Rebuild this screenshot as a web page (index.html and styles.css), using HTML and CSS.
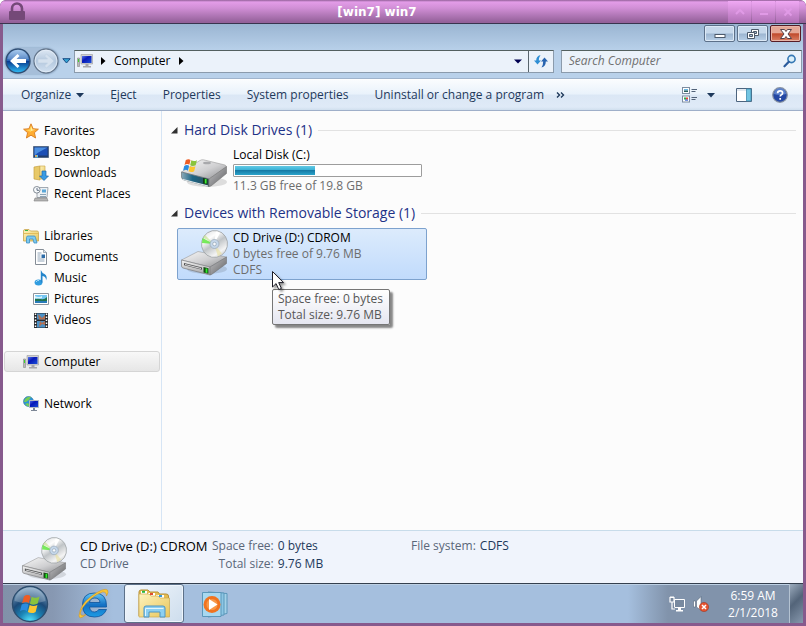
FILE: index.html
```html
<!DOCTYPE html>
<html lang="en">
<head>
<meta charset="utf-8">
<title>[win7] win7</title>
<link rel="stylesheet" href="styles.css">
</head>
<body>
<svg class="defs" aria-hidden="true">
  <defs>
    <linearGradient id="metal" x1="0" y1="0" x2="1" y2="1"><stop offset="0" stop-color="#f8f8f8"/><stop offset=".55" stop-color="#cfcfd1"/><stop offset="1" stop-color="#8c8d90"/></linearGradient>
    <linearGradient id="side" x1="0" y1="0" x2="1" y2="1"><stop offset="0" stop-color="#c4c4c6"/><stop offset="1" stop-color="#5e5f62"/></linearGradient>
    <linearGradient id="front" x1="0" y1="0" x2="0" y2="1"><stop offset="0" stop-color="#f4f4f4"/><stop offset="1" stop-color="#a2a2a4"/></linearGradient>
    <linearGradient id="teal" x1="0" y1="0" x2="1" y2="0"><stop offset="0" stop-color="#8ba9b8"/><stop offset=".4" stop-color="#1d6686"/><stop offset="1" stop-color="#2e4d5a"/></linearGradient>
    <linearGradient id="screen" x1="0" y1="0" x2="1" y2="1"><stop offset="0" stop-color="#5a78e8"/><stop offset=".4" stop-color="#0818b8"/><stop offset="1" stop-color="#1c50d8"/></linearGradient>
    <linearGradient id="disc" x1="0" y1="0" x2="1" y2="1"><stop offset="0" stop-color="#d4d6d8"/><stop offset=".3" stop-color="#fdfdfd"/><stop offset=".5" stop-color="#c0c4c7"/><stop offset=".75" stop-color="#f4f4f4"/><stop offset="1" stop-color="#b0b4b7"/></linearGradient>
    <linearGradient id="folder" x1="0" y1="0" x2="1" y2="1"><stop offset="0" stop-color="#fdf3bd"/><stop offset="1" stop-color="#e9c65c"/></linearGradient>
    <radialGradient id="orb" cx=".5" cy="1" r="1"><stop offset="0" stop-color="#58e8ff"/><stop offset=".3" stop-color="#1b86b8"/><stop offset=".6" stop-color="#1c4a78"/><stop offset="1" stop-color="#8fb0cc"/></radialGradient>
    <linearGradient id="back" x1="0" y1="0" x2="0" y2="1"><stop offset="0" stop-color="#9cc4ee"/><stop offset=".48" stop-color="#2864b4"/><stop offset=".52" stop-color="#083c90"/><stop offset="1" stop-color="#30c0f8"/></linearGradient>
    <linearGradient id="fwd" x1="0" y1="0" x2="0" y2="1"><stop offset="0" stop-color="#dfe9f4"/><stop offset=".5" stop-color="#b4c8de"/><stop offset="1" stop-color="#d3e2f2"/></linearGradient>
    <linearGradient id="ie" x1="0" y1="0" x2="0" y2="1"><stop offset="0" stop-color="#64c8f8"/><stop offset=".5" stop-color="#1470c4"/><stop offset="1" stop-color="#1c9ce4"/></linearGradient>
    <symbol id="computer" viewBox="0 0 16 16">
      <path d="M.5 5h2v8.500h-2z" fill="#b8b8b8" stroke="#888" stroke-width=".6"/><path d="M1.500 6v3" stroke="#3fd42c"/>
      <path d="M4 1.500h11.500v9.500H4z" fill="#d0d0d4" stroke="#9a9a9e" stroke-width=".6"/><path d="M5 3h9.500v7H5z" fill="url(#screen)"/>
      <path d="M8.500 11h3v2h2.500v1.500H6V13h2.500z" fill="#a6a6aa"/>
    </symbol>
    <symbol id="flag" viewBox="0 0 16 16">
      <path d="M3 2.200C5 .8 6.800 1 8 2L6.800 7.300C5.500 6.300 3.500 6.200 1.600 7.400z" fill="#ed5d24"/>
      <path d="M8.900 2.500c1.900 1 3.900 1 6-.2l-1.400 5.400c-2 1.100-4 1.100-5.900.1z" fill="#8ac43c"/>
      <path d="M1.300 8.400C3.300 7.200 5.200 7.300 6.500 8.300L5.200 13.500C3.900 12.400 2 12.300 0 13.600z" fill="#2a8ce0"/>
      <path d="M7.400 8.700c1.900 1 3.900 1 5.900 0l-1.400 5.300c-2 1.200-4 1.200-5.900.1z" fill="#fcc630"/>
    </symbol>
    <symbol id="cddrive" viewBox="0 0 48 46">
      <ellipse cx="27" cy="39" rx="20" ry="5" fill="#000" opacity=".12"/>
      <path d="M1.500 30 18 21.500 46.500 27 30 37z" fill="url(#metal)" stroke="#9a9a9a" stroke-width=".6"/>
      <path d="M1.500 30 30 37v8L3 38q-1.500-.5-1.500-2z" fill="url(#front)" stroke="#7c7c7e" stroke-width=".7"/>
      <path d="M30 37 46.500 27v6.500L31.500 44.500 30 45z" fill="url(#side)" stroke="#727274" stroke-width=".6"/>
      <path d="M4 33l18 4.500v2.300L4 35.300z" fill="#4d4e50"/><path d="M5 34.500l16 4" stroke="#fff" stroke-width=".8"/>
      <path d="M23.500 37 28.500 38.200v5.500l-5-1.200z" fill="#174d14"/><path d="M26.500 38.500v4.300" stroke="#2bf028" stroke-width="1.800"/>
      <ellipse cx="34.500" cy="14" rx="13" ry="13.500" fill="url(#disc)" stroke="#a0a5a8" stroke-width=".8" transform="rotate(12 34.500 14)"/>
      <path d="M34 14 22 13 22.500 8z" fill="#60e840" opacity=".85"/><path d="M34 14 23 7.500 25 5z" fill="#b8e070" opacity=".5"/><path d="M34 14l4 12.500 4-3z" fill="#e8e09c" opacity=".6"/><path d="M34 14 36 1.500 40 3z" fill="#fff"/>
      <circle cx="34.500" cy="14" r="4.500" fill="#c5d7ea" stroke="#98a8b8" stroke-width=".7"/><circle cx="34.500" cy="14" r="1.800" fill="#f8fafc" stroke="#93a5b5" stroke-width=".7"/>
    </symbol>
  </defs>
</svg>

<header class="host-bar">
  <svg class="lock" viewBox="0 0 16 19"><path d="M3 9V6.500a5 5 0 0 1 10 0V9" fill="none" stroke="#744978" stroke-width="2.600"/><rect y="9" width="16" height="9" rx="1" fill="#744978"/></svg>
  <h1>[win7] win7</h1>
  <div class="host-buttons">
    <button aria-label="Shade"><svg viewBox="0 0 12 12"><path d="M2 8l4-4 4 4" /></svg></button>
    <button aria-label="Minimize host"><svg viewBox="0 0 12 12"><path d="M2 8h8"/></svg></button>
    <button aria-label="Close host"><svg viewBox="0 0 12 12"><path d="M2.500 2.500l7 7m0-7-7 7"/></svg></button>
  </div>
</header>

<div class="screen">
  <div class="glass">
    <div class="caption">
      <button aria-label="Minimize"><svg viewBox="0 0 16 12"><rect x="3" y="6.500" width="10" height="3" fill="#fff" stroke="#4d5a6b"/></svg></button>
      <button aria-label="Restore"><svg viewBox="0 0 16 12"><path d="M6.500 1.500h7v6h-7z" fill="#fff" stroke="#4d5a6b"/><path d="M8.500 3.500h3v2h-3z" fill="#a3bad2" stroke="#4d5a6b"/><path d="M2.500 4.500h7v6h-7z" fill="#fff" stroke="#4d5a6b"/><path d="M4.500 6.500h3v2h-3z" fill="#a3bad2" stroke="#4d5a6b"/></svg></button>
      <button class="close" aria-label="Close"><svg viewBox="0 0 16 12"><path d="M2.500 1.500h4L8 3.500l1.500-2h4L10 6l3.500 4.500h-4L8 8.500l-1.500 2h-4L6 6z" fill="#fff" stroke="#544048"/></svg></button>
    </div>
    <div class="navrow">
      <div class="arrows">
        <button aria-label="Back"><svg viewBox="0 0 26 26"><circle cx="13" cy="13" r="12" fill="url(#back)" stroke="#304e74" stroke-width="1.400"/><path d="M2.500 11a10.600 10.600 0 0 1 21 0q-10 3-21 0z" fill="#fff" opacity=".2"/><path d="M5 13l7.500-7 2 2-3 3H21v4h-9.500l3 3-2 2z" fill="#fff"/></svg></button>
        <button aria-label="Forward"><svg viewBox="0 0 26 26"><circle cx="13" cy="13" r="12" fill="url(#fwd)" stroke="#66788e" stroke-width="1.300"/><circle cx="13" cy="13" r="10.900" fill="none" stroke="#e4eef8" stroke-width=".8"/><path d="M21 13l-7.500-7-2 2 3 3H5v4h9.500l-3 3 2 2z" fill="#d5e1ee" stroke="#bccee0" stroke-width=".6"/></svg></button>
      </div>
      <button class="recent" aria-label="Recent pages"><svg viewBox="0 0 9 6"><path d="M.8.700h7.400L4.500 5z" fill="#35a4d4" stroke="#184c84"/></svg></button>
      <div class="address">
        <svg class="icon16"><use href="#computer"/></svg>
        <button class="crumb-arrow" aria-label="Locations"><svg viewBox="0 0 5 8"><path d="M0 0l4.500 4L0 8z"/></svg></button>
        <button class="crumb">Computer</button>
        <button class="crumb-arrow" aria-label="Subfolders"><svg viewBox="0 0 5 8"><path d="M0 0l4.500 4L0 8z"/></svg></button>
        <button class="history" aria-label="Previous locations"><svg viewBox="0 0 8 5"><path d="M0 .5h8L4 4.500z" fill="#000050"/></svg></button>
        <button class="refresh" aria-label="Refresh"><svg viewBox="0 0 16 16"><path d="M1 7.500 4.500 11.500 8 7.500H5.800q0-3 1.700-5.500Q3.200 3 3.200 7.500z" fill="#2e8ed4"/><path d="M8 8.500 11.500 4.500 15 8.500h-2.200q0 5-4.300 6 1.700-2.500 1.700-6z" fill="#2864b0"/></svg></button>
      </div>
      <div class="search">
        <input type="search" placeholder="Search Computer" aria-label="Search Computer">
        <svg viewBox="0 0 14 14"><circle cx="8.500" cy="5" r="3.600" fill="#dcf0fa" stroke="#3678b4" stroke-width="1.600"/><path d="M5.800 7.800 1.500 12.300" stroke="#2c5c9c" stroke-width="2.200" stroke-linecap="round"/></svg>
      </div>
    </div>
  </div>

  <div class="toolbar">
    <button>Organize <svg class="down" viewBox="0 0 8 5"><path d="M0 0h8L4 4.500z"/></svg></button>
    <button>Eject</button>
    <button>Properties</button>
    <button>System properties</button>
    <button>Uninstall or change a program</button>
    <button aria-label="More commands"><svg class="more" viewBox="0 0 9 6"><path d="M1 .5 3.500 3 1 5.500M5 .5 7.500 3 5 5.500"/></svg></button>
    <div class="tools">
      <button aria-label="Change view"><svg class="icon16" viewBox="0 0 16 16"><rect x=".5" y=".5" width="7" height="6" fill="#fff" stroke="#7d8da0"/><path d="M2 2h4v1.500H2z" fill="#69b8e4"/><path d="M2 3.500h4V5H2z" fill="#2c5f5c"/><rect x=".5" y="9" width="7" height="6" fill="#fff" stroke="#7d8da0"/><path d="M2 10.500h2v2H2z" fill="#2cae46"/><path d="M4 10.500h2v2H4z" fill="#ee4632"/><path d="M3 12.500h3v1.200H3z" fill="#3560ce"/><path d="M9.500 2.500H15M9.500 4.500h4M9.500 10.500H15M9.500 12.500h4" stroke="#516278"/></svg></button>
      <button aria-label="View options"><svg class="down" viewBox="0 0 8 5"><path d="M0 0h8L4 4.500z"/></svg></button>
      <button class="pane" aria-label="Preview pane"><svg class="icon16" viewBox="0 0 16 16"><path d="M.5 1.500h15v13H.5z" fill="#fff" stroke="#4c647e"/><path d="M1 2h14v2H1z" fill="#e1e8f0"/><path d="M10.500 2h4.500v12h-4.500z" fill="#72c5e2" stroke="#3f8db0" stroke-width=".8"/></svg></button>
      <button aria-label="Help"><svg class="icon16" viewBox="0 0 16 16"><circle cx="8" cy="8" r="7.300" fill="#2448a4" stroke="#8993a2" stroke-width="1.200"/><path d="M2 7a6 6 0 0 1 12 0q-6 2-12 0z" fill="#7b9fdf" opacity=".65"/><path d="M5.600 6.200q0-2.400 2.500-2.400t2.500 2.100q0 1.200-1.500 2-.8.500-.8 1.600M8.200 11v1.700" fill="none" stroke="#fff" stroke-width="1.700"/></svg></button>
    </div>
  </div>

  <main class="content">
    <nav class="sidebar" aria-label="Folders">
      <ul>
        <li><a href="#"><svg class="icon16" viewBox="0 0 16 16"><path d="M8 .8l2.100 4.900 5.300.5-4 3.500 1.200 5.300L8 12.200 3.400 15l1.200-5.300-4-3.500 5.300-.5z" fill="#ffad32" stroke="#d87d20" stroke-width=".9"/><path d="M8 2.800 9.400 6.500l3 .3L8 8z" fill="#fff0a0"/><path d="M8 2.800 6.600 6.500 3 7 8 9z" fill="#ffd65a"/></svg>Favorites</a>
          <ul>
            <li><a href="#"><svg class="icon16" viewBox="0 0 16 16"><path d="M.5 2.500h15v11H.5z" fill="#203d6c" stroke="#566b89"/><path d="M1.500 3.500h13v8h-13z" fill="#1c4fb5"/><path d="M1.500 3.500h13L8 7q-4 2-6.500 4.500z" fill="#4c8fe0"/><path d="M2 11h3v2.500H2z" fill="#54c0e8"/><circle cx="3" cy="12" r="1" fill="#f4a444"/></svg>Desktop</a></li>
            <li><a href="#"><svg class="icon16" viewBox="0 0 16 16"><path d="M1 2l6-1v14l-6-1z" fill="#e8c968" stroke="#c6a143" stroke-width=".7"/><path d="M7 1h5v13H7z" fill="url(#folder)" stroke="#d0ae50" stroke-width=".7"/><path d="M9 6h4v5h2.500L11 15.500 6.500 11H9z" fill="#389be4" stroke="#1e67ac" stroke-width=".7"/></svg>Downloads</a></li>
            <li><a href="#"><svg class="icon16" viewBox="0 0 16 16"><path d="M4 1.500h11l-1 10H4z" fill="#edf1f4" stroke="#8d969f" stroke-width=".8"/><path d="M9 3.500h4v3H9z" fill="#5ba7d8"/><path d="M7 8.500h6M7 10.500h6" stroke="#8da4b6"/><path d="M2 12h12l1 3H1z" fill="#b4b4b4" stroke="#818181" stroke-width=".6"/><circle cx="3.800" cy="3.800" r="3.300" fill="#f8fbfd" stroke="#838b94"/><path d="M4 2v2.300h2" fill="none" stroke="#3d4f65" stroke-width=".8"/></svg>Recent Places</a></li>
          </ul>
        </li>
        <li><a href="#"><svg class="icon16" viewBox="0 0 16 16"><path d="M.5 3q0-1.500 1.500-1.500h4L7.500 3H14q1.500 0 1.500 1.500V13H.5z" fill="url(#folder)" stroke="#c9a64c" stroke-width=".8"/><path d="M2 2.500h3" stroke="#39b54a" stroke-width="1.200"/><path d="M1 5.500h14" stroke="#e3bd5b"/><path d="M3.500 15V9.500Q3.500 8 5 8h6q1.500 0 1.500 1.500L14 15h-3l-1-4H6.500v4z" fill="#7dc9ef" stroke="#3c91c4" stroke-width=".8"/></svg>Libraries</a>
          <ul>
            <li><a href="#"><svg class="icon16" viewBox="0 0 16 16"><path d="M2.500 .5h8l3 3v12h-11z" fill="#fff" stroke="#858d96"/><path d="M10.500.5v3h3" fill="#d9e7f1" stroke="#858d96" stroke-width=".7"/><path d="M4.500 4h4M4.500 6h3M4.500 8h3M4.500 10h7M4.500 12h7" stroke="#93a6b9"/><path d="M8.500 5.500h3.500V9H8.500z" fill="#2d6ca8"/></svg>Documents</a></li>
            <li><a href="#"><svg class="icon16" viewBox="0 0 16 16"><ellipse cx="5.500" cy="12.500" rx="3.900" ry="3" fill="#319de0"/><path d="M7.800 12.500V0q1.200 3 3.700 4 3.500 2.500 1.500 6.500.3-4-3.500-4.500v6.500z" fill="#2385cb"/><path d="M3 12q1-2 3-1.500" stroke="#a8dcf8" fill="none"/></svg>Music</a></li>
            <li><a href="#"><svg class="icon16" viewBox="0 0 16 16"><path d="M.5 2.500h15v11H.5z" fill="#fff" stroke="#8e959d"/><path d="M2 4h12v8H2z" fill="#76c6f2"/><path d="M2 8q3-1 6 0t6-2v6H2z" fill="#20734e"/><path d="M2 10h12v2H2z" fill="#287bb9"/><path d="M2 5q4 2 7 0v2q-4 1-7 0z" fill="#d7f2fc"/></svg>Pictures</a></li>
            <li><a href="#"><svg class="icon16" viewBox="0 0 16 16"><path d="M1 1h14v15H1z" fill="#26292e"/><path d="M4 1.500h8v6H4zM4 9h8v6.500H4z" fill="#4b91c7"/><path d="M5 2l4 4 3-3v4.500H6zM7 9l2 2 3-2v4l-3-1-3 3z" fill="#b46f50"/><path d="M2.500 1.500v14M13.500 1.500v14" stroke="#fff" stroke-width="1.500" stroke-dasharray="1.500 1.500"/></svg>Videos</a></li>
          </ul>
        </li>
        <li><a class="current" href="#" aria-current="page"><svg class="icon16"><use href="#computer"/></svg>Computer</a></li>
        <li><a href="#"><svg class="icon16" viewBox="0 0 16 16"><circle cx="5.500" cy="5.500" r="5" fill="#2d94d8" stroke="#31739f" stroke-width=".6"/><path d="M2 3q3-3 6-2L6 4 3 6 1 6zM2 8l3-1 2 3-2 .500z" fill="#76cd56"/><path d="M6.500 4.500h9v7h-9z" fill="url(#screen)" stroke="#b3bac4"/><path d="M10 12h2v2h2v1H8v-1h2z" fill="#7d8796"/></svg>Network</a></li>
      </ul>
    </nav>

    <div class="files">
      <section>
        <h2><svg viewBox="0 0 7 7"><path d="M6.500 0v6.500H0z"/></svg>Hard Disk Drives (1)</h2>
        <div class="drive">
          <svg class="drive-icon" viewBox="0 0 48 46">
            <ellipse cx="27" cy="35" rx="20" ry="5" fill="#000" opacity=".12"/>
            <path d="M1.500 25 20 13.500q1.500-1 3.500-.700L45 18q2 .8 1 2.500L29 32z" fill="url(#metal)" stroke="#9a9a9a" stroke-width=".6"/>
            <path d="M1.500 25 29 32v7.500L4 33q-2.500-1-2.500-3z" fill="url(#teal)" stroke="#6c7478" stroke-width=".7"/>
            <path d="M29 32 46.500 19.500v7L31 39l-2 .5z" fill="url(#side)" stroke="#747474" stroke-width=".6"/>
            <path d="M3 32.500l25 6.500" stroke="#e2e8ea" stroke-width="1.200"/><path d="M23 31 27.500 32v5.500l-4.500-1z" fill="#123c16"/><path d="M25.700 32v4.500" stroke="#3af034" stroke-width="1.800"/>
            <ellipse cx="27" cy="16" rx="4" ry="1.300" fill="#a8a9ac"/>
            <use href="#flag" x="2" y="11" width="17" height="15"/>
          </svg>
          <div class="drive-text">
            <p class="name">Local Disk (C:)</p>
            <div class="meter" role="meter" aria-label="Used space" aria-valuemin="0" aria-valuemax="100" aria-valuenow="43"><div class="fill" style="width:43%"></div></div>
            <p>11.3 GB free of 19.8 GB</p>
          </div>
        </div>
      </section>
      <section>
        <h2><svg viewBox="0 0 7 7"><path d="M6.500 0v6.500H0z"/></svg>Devices with Removable Storage (1)</h2>
        <div class="drive selected">
          <svg class="drive-icon"><use href="#cddrive"/></svg>
          <div class="drive-text">
            <p class="name">CD Drive (D:) CDROM</p>
            <p>0 bytes free of 9.76 MB</p>
            <p>CDFS</p>
          </div>
          <svg class="pointer" viewBox="0 0 12 20"><path d="M.5.500v15.500l3.600-3.400 2.700 6 2.600-1.200-2.700-5.800h4.800z" fill="#fff" stroke="#1d1d28"/></svg>
          <div class="tooltip" role="tooltip"><p>Space free: 0 bytes</p><p>Total size: 9.76 MB</p></div>
        </div>
      </section>
    </div>
  </main>

  <section class="details" aria-label="Details">
    <svg class="drive-icon"><use href="#cddrive"/></svg>
    <div class="title"><p class="name">CD Drive (D:) CDROM</p><p>CD Drive</p></div>
    <dl>
      <dt>Space free:</dt><dd>0 bytes</dd>
      <dt>Total size:</dt><dd>9.76 MB</dd>
    </dl>
    <dl>
      <dt>File system:</dt><dd>CDFS</dd>
    </dl>
  </section>

  <footer class="taskbar">
    <button class="start" aria-label="Start"><svg viewBox="0 0 38 38"><circle cx="19" cy="19" r="17.500" fill="url(#orb)" stroke="#2c4d6e" stroke-width="1.400"/><path d="M3.500 16a15.600 15.600 0 0 1 31 0q-15 5-31 0z" fill="#fff" opacity=".22"/><use href="#flag" x="9" y="8" width="21" height="22"/></svg></button>
    <button class="task" aria-label="Internet Explorer"><svg viewBox="0 0 36 36"><path d="M31.500 23.500Q28.500 31 19.500 31 7.500 31 7.500 19T19.500 7q12.500 0 12 14H14.500Q15 26 19.500 26q3 0 4.200-2.500zM14.500 16.500H25Q24.500 12 19.800 12t-5.300 4.500z" fill="url(#ie)" stroke="#0e529b" stroke-width=".8" fill-rule="evenodd"/><path d="M11 28.500q-7 6-7 1 1-11 12-19Q29 1 32.500 4q1.500 2-1 6 0-4.500-4-4Q16 10 7.500 22q-3 5-1.500 7 1.500 1 5-.500z" fill="#f8c638" stroke="#cc901e" stroke-width=".5"/></svg></button>
    <button class="task active" aria-label="Windows Explorer"><svg viewBox="0 0 36 36"><path d="M3 6q0-2 2-2h7l2 2h8l1.500 2H30q2.500 0 2.500 2v20H3z" fill="#e5bd53" stroke="#b78f36"/><path d="M5 5h6v3H5zM12 7h7v3h-7zM20 9h8v3h-8z" fill="#fff"/><path d="M6 5.800h3" stroke="#28b83e" stroke-width="2"/><path d="M14 8h3" stroke="#e04d31" stroke-width="2"/><path d="M23 10h3" stroke="#359be0" stroke-width="2"/><path d="M3 8h10l2 2h7l2 2h9.500v19H3z" fill="url(#folder)" stroke="#ccab4e" stroke-width=".7"/><path d="M8 31v-9q0-2 2-2h17q2 0 2 2v9h-5v-5H13v5z" fill="#8bcff1" stroke="#4c94c4"/><path d="M9.500 30v-7.500h18" stroke="#e2f5fd" fill="none"/></svg></button>
    <button class="task player" aria-label="Windows Media Player"><svg viewBox="0 0 30 30"><path d="M11 3.500l16 1v20l-16 3z" fill="#a4d2e9" stroke="#5b97ba"/><path d="M8 3l16 1v22l-16 2z" fill="#8cc6e4" stroke="#5b97ba"/><path d="M2.500 3.500h18.500v24H2.500z" fill="#a8d8f0" stroke="#5b97ba"/><circle cx="12" cy="15.500" r="8.500" fill="#f07320"/><circle cx="12" cy="15.500" r="5.500" fill="#f89848"/><path d="M9 10v11l8.500-5.500z" fill="#fff"/></svg></button>
    <div class="tray">
      <svg class="icon16" viewBox="0 0 16 16"><path d="M5.500 3.500h10v8h-10z" fill="#78899f" stroke="#fff"/><path d="M9 12h3v2h2v1.500H7V14h2z" fill="#fff"/><path d="M1 1.500h4V6H1zM3 6v7h3" fill="#78899f" stroke="#fff" stroke-width="1.200"/><path d="M2 0v2M4 0v2" stroke="#fff"/></svg>
      <svg class="icon16" viewBox="0 0 16 16"><path d="M.5 5h2v6h-2zM3.500 5 8 .5v14L3.500 11z" fill="#fff" stroke="#56657a" stroke-width=".6"/><circle cx="11" cy="11" r="4.600" fill="#e5532f" stroke="#9f3925" stroke-width=".6"/><path d="M9 9l4 4m0-4-4 4" stroke="#fff" stroke-width="1.500"/></svg>
      <time datetime="2018-02-01T06:59">6:59 AM<br>2/1/2018</time>
      <button class="show-desktop" aria-label="Show desktop"></button>
    </div>
  </footer>
</div>
</body>
</html>
```
FILE: styles.css
```css
* { box-sizing: border-box; }
body {
  margin: 0;
  min-height: 100vh;
  display: flex;
  flex-direction: column;
  background: #875a8d;
  border-radius: 6px 6px 0 0;
  color: #000;
  font: 12px/16px "Open Sans", "Noto Sans", sans-serif;
}
html { background: #fff; }
p, h1, h2, ul, dl, dd { margin: 0; padding: 0; }
ul { list-style: none; }
svg { display: block; flex: none; }
button { margin: 0; padding: 0; border: 0; background: none; color: inherit; font: inherit; }
.defs { position: absolute; width: 0; height: 0; }
.icon16 { width: 16px; height: 16px; }

.host-bar {
  display: grid;
  grid-template-columns: 1fr auto 1fr;
  align-items: center;
  height: 24px;
  padding: 0 7px 0 9px;
  border-bottom: 1px solid #39344e;
  border-radius: 6px 6px 0 0;
  background: linear-gradient(#94619a, #e39ce8 2px, #d18fd6 8px, #94619a 22px);
}
.host-bar h1 { padding-right: 54px; color: #fff; font: bold 12px/20px "DejaVu Sans", sans-serif; }
.lock { width: 16px; height: 19px; }
.host-buttons { display: flex; justify-self: end; gap: 1px; }
.host-buttons button {
  display: grid;
  place-items: center;
  width: 23px;
  height: 22px;
  background: linear-gradient(#f0a8f4, #b070b6);
}
.host-buttons svg { width: 12px; height: 12px; fill: none; stroke: #e09ae6; stroke-width: 2; }

.screen {
  flex: 1;
  display: flex;
  flex-direction: column;
  margin: 0 3px 3px;
  background: #fcfcfc;
}
.glass { height: 55px; background: linear-gradient(#9ab5d2, #b9d1ea 50%, #b9d1ea); border-bottom: 1px solid #a0b4cc; }
.caption { display: flex; justify-content: flex-end; gap: 2px; padding: 1px 2px 0 0; }
.caption button {
  display: grid;
  place-items: center;
  width: 31px;
  height: 17px;
  border: 1px solid #5c7089;
  border-radius: 2px;
  background: linear-gradient(#c6d8eb 48%, #9cb5d0 52%, #b9d0e8);
  box-shadow: inset 0 0 0 1px #dce9f6;
}
.caption svg { width: 16px; height: 12px; }
.caption .close {
  border-color: #561c26;
  background: linear-gradient(#e5a795 45%, #c04a2c 52%, #d98166);
  box-shadow: inset 0 0 0 1px #e7b5a8;
}
.navrow { display: flex; align-items: center; height: 26px; margin-top: 6px; padding: 0 1px 0 2px; }
.arrows { display: flex; gap: 2px; width: 54px; border-radius: 13px; background: #a6bed9; box-shadow: 0 0 2px #708cab; }
.arrows svg { width: 26px; height: 26px; }
.recent { display: grid; place-items: center; width: 15px; height: 20px; }
.recent svg { width: 9px; height: 6px; }
.address, .search {
  display: flex;
  align-items: center;
  height: 23px;
  border: 1px solid #8b9bac;
  border-top-color: #53605f;
  background: #ebf2fa;
}
.address { flex: 483; padding-left: 2px; }
.crumb-arrow { padding: 0 8px; }
.crumb-arrow svg { width: 5px; height: 8px; }
.history { margin-left: auto; padding: 7px 6px; }
.history svg { width: 8px; height: 5px; }
.refresh { align-self: stretch; display: grid; place-items: center; width: 25px; border-left: 1px solid #59656d; }
.refresh svg { width: 16px; height: 16px; }
.search { flex: 239; margin-left: 7px; padding-right: 4px; }
.search input { flex: 1; min-width: 0; padding: 0 7px; border: 0; outline: 0; background: none; font: italic 12px/16px "Open Sans", sans-serif; }
.search input::placeholder { color: #707070; opacity: 1; }
.search svg { width: 14px; height: 14px; }

.toolbar {
  display: flex;
  align-items: center;
  gap: 26px;
  height: 32px;
  padding: 0 15px 0 18px;
  border-top: 1px solid #fff;
  border-bottom: 1px solid #9fafc9;
  background: linear-gradient(#fafcfe, #e9f2fb 47%, #dbe7f5 50%, #dfeaf7 90%, #d0dfee);
  color: #1e395b;
  white-space: nowrap;
}
.toolbar button { display: flex; align-items: center; gap: 5px; }
.down { width: 8px; height: 5px; fill: #1e395b; }
.more { width: 9px; height: 6px; margin-left: -14px; fill: none; stroke: #1e395b; stroke-width: 1.4; }
.tools { display: flex; align-items: center; gap: 9px; margin-left: auto; }
.tools .pane { margin: 0 11px 0 12px; }

.content { flex: 1; display: flex; }
.sidebar { width: 159px; padding: 9px 1px 0; border-right: 1px solid #d6e5f5; line-height: 19px; }
.sidebar a {
  display: flex;
  align-items: center;
  gap: 5px;
  height: 21px;
  padding-left: 18px;
  border: 1px solid transparent;
  border-radius: 3px;
  color: #000;
  text-decoration: none;
}
.sidebar ul ul a { padding-left: 28px; }
.sidebar > ul > li { margin-bottom: 21px; }
.sidebar .current { border-color: #d5d5d5; background: linear-gradient(#f8f8f8, #e6e6e6); }

.files { flex: 1; min-width: 0; padding: 9px 7px 0 9px; }
.files h2 { display: flex; align-items: center; gap: 6px; height: 20px; color: #1e3287; font-size: 14px; font-weight: 400; white-space: nowrap; }
.files h2::after { content: ""; flex: 1; height: 1px; background: #e2e2e2; }
.files h2 svg { width: 7px; height: 7px; fill: #303030; }
.drive { position: relative; display: flex; gap: 5px; width: 250px; margin: 5px 0 0 6px; padding: 1px 2px; border: 1px solid transparent; border-radius: 2px; }
.files section + section { margin-top: 7px; }
.drive-icon { width: 48px; height: 46px; }
.drive-text { flex: 1; color: #6d6d6d; }
.name { color: #000; }
.meter { width: 189px; height: 13px; margin: 1px 0; padding: 1px; border: 1px solid #9d9d9d; border-radius: 1px; background: #fff; }
.fill { height: 100%; background: linear-gradient(#62c9e4, #38b0d5 45%, #167aa5 50%, #2ba4cb); }
.selected { height: 52px; border-color: #7da2ce; background: linear-gradient(#dcebfc, #c1dbfc); }
.pointer { position: absolute; left: 94px; top: 42px; width: 12px; height: 20px; z-index: 2; filter: drop-shadow(2px 2px 1px #0006); }
.tooltip {
  position: absolute;
  left: 94px;
  top: 60px;
  padding: 1px 6px 1px 5px;
  border: 1px solid #767676;
  border-radius: 2px;
  background: linear-gradient(#fff, #e5e6f0);
  box-shadow: 3px 3px 2px #0007;
  color: #575757;
  white-space: nowrap;
}

.details { display: flex; height: 53px; padding: 6px 17px 0; border-top: 1px solid #c8dcea; background: #f0f4fc; color: #5a6779; line-height: 18px; white-space: nowrap; }
.details .drive-icon { height: 44px; }
.title { min-width: 132px; margin-left: 12px; }
.title .name { font-size: 13px; }
.details dl { display: grid; grid-template-columns: auto auto; place-content: start; column-gap: 4px; width: 199px; }
.details dt { text-align: right; }
.details dd { color: #1e395b; }

.taskbar {
  display: flex;
  height: 40px;
  border-top: 1px solid #343f4e;
  background: linear-gradient(90deg, #8191a9, #8798b2 50px, #a5bfde 110px, #a5bfde calc(100% - 175px), #8193ab calc(100% - 135px), #8193ab);
  box-shadow: inset 0 1px #bdd0e4;
}
.start { width: 54px; padding: 0 8px; }
.start svg { width: 38px; height: 38px; }
.task { display: grid; place-items: center; width: 60px; margin-left: 1px; }
.task:nth-child(2) { margin-left: 6px; }
.task svg { width: 36px; height: 36px; }
.active { border: 1px solid #5d7189; border-radius: 3px; background: linear-gradient(135deg, #f5f9fd, #cddded); box-shadow: inset 0 0 0 1px #eef5fc; }
.player svg { width: 30px; height: 30px; }
.tray { display: flex; align-items: center; gap: 8px; margin-left: auto; color: #fff; text-align: center; }
.tray time { min-width: 72px; margin-right: -8px; line-height: 17px; }
.show-desktop { align-self: stretch; width: 14px; border: 1px solid #b4c2d1; border-width: 0 0 0 1px; background: linear-gradient(135deg, #9babbd, #536479 45%, #8798ad); }
```
